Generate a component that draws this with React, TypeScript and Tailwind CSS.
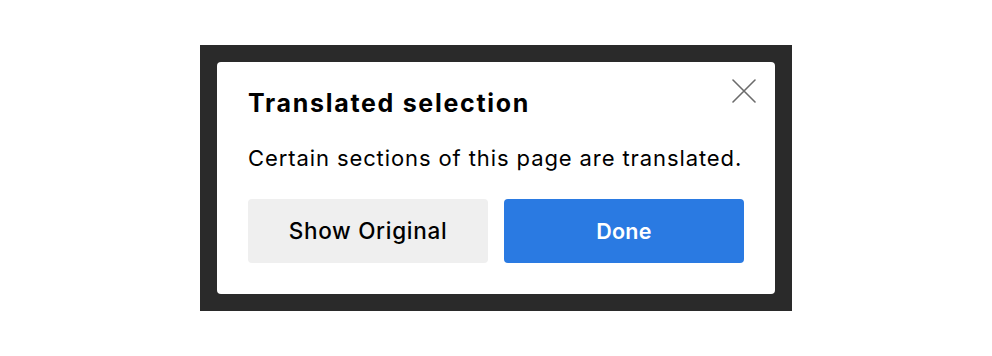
import React from "react"

const CloseIcon = () => (
  <svg width="24" height="24" viewBox="0 0 24 24" fill="none">
    <path d="M1 1L23 23M23 1L1 23" stroke="#6b6b6b" strokeWidth="1.6" strokeLinecap="round" />
  </svg>
)

const App = () => {
  return (
    <div
      className="h-[356px] w-full bg-white flex items-center justify-center"
      style={{ fontFamily: "Inter, 'Noto Sans', sans-serif" }}
    >
      <div className="bg-[#2a2a2a] p-[17px]">
        <div className="relative w-[558px] h-[232px] bg-white rounded-[4px] px-[31px] pt-[25px]">
          <button className="absolute top-[17px] right-[19px] w-6 h-6 flex items-center justify-center">
            <CloseIcon />
          </button>
          <h2 className="text-[25px] leading-[32px] font-bold text-black tracking-[1.7px]">
            Translated selection
          </h2>
          <p className="mt-[25px] text-[22px] leading-[28px] text-black tracking-[0.9px]">
            Certain sections of this page are translated.
          </p>
          <div className="mt-[27px] flex gap-4">
            <button className="w-[240px] h-[64px] rounded-[4px] bg-[#efefef] text-[22.5px] font-medium text-black tracking-[0.7px]">
              Show Original
            </button>
            <button className="w-[240px] h-[64px] rounded-[4px] bg-[#2a7ae2] text-[21.5px] font-semibold text-white tracking-[0.3px]">
              Done
            </button>
          </div>
        </div>
      </div>
    </div>
  )
}

export default App
